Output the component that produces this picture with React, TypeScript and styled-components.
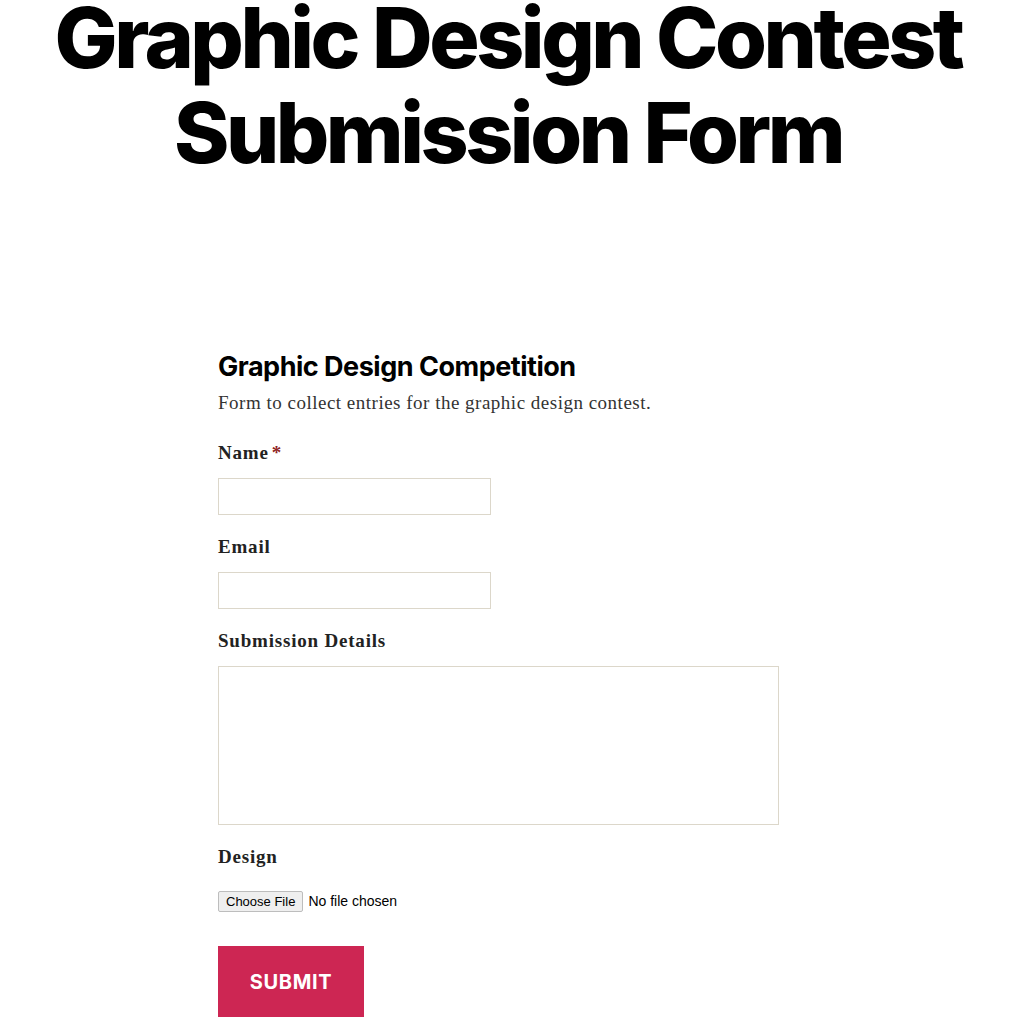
import React from "react";
import styled, { createGlobalStyle } from "styled-components";

const GlobalStyle = createGlobalStyle`
  html, body {
    margin: 0;
    padding: 0;
    background: #ffffff;
    color: #000000;
  }
  body {
    font-family: "Liberation Serif", "Times New Roman", serif;
    overflow: hidden;
  }
  * {
    box-sizing: border-box;
  }
`;

const Page = styled.main`
  width: 100%;
  display: flex;
  flex-direction: column;
  align-items: center;
`;

const EntryTitle = styled.h1`
  margin: 0;
  font-family: Inter, "Liberation Sans", sans-serif;
  font-size: 84px;
  font-weight: 800;
  letter-spacing: -0.0415625em;
  text-align: center;
  color: #000;
`;

const TitleLine = styled.span`
  display: block;
  line-height: 76px;
  & + & {
    margin-top: 19px;
  }
`;

const FormWrap = styled.section`
  width: 580px;
  margin-top: 180px;
`;

const FormTitle = styled.h3`
  margin: 0;
  font-family: Inter, "Liberation Sans", sans-serif;
  font-size: 27px;
  font-weight: 700;
  line-height: 32px;
  letter-spacing: -0.018em;
  color: #000;
`;

const FormDesc = styled.p`
  margin: 8px 0 0;
  font-size: 19px;
  line-height: 24px;
  letter-spacing: 0.5px;
  color: #333;
`;

const Fields = styled.div`
  margin-top: 26px;
  display: flex;
  flex-direction: column;
  gap: 20px;
`;

const Field = styled.div`
  display: flex;
  flex-direction: column;
  align-items: flex-start;
`;

const Label = styled.label<{ $gap?: number }>`
  font-size: 19px;
  font-weight: 700;
  line-height: 24px;
  letter-spacing: 0.8px;
  color: #222;
  margin-bottom: ${(p) => p.$gap ?? 13}px;
`;

const Required = styled.span`
  color: #8f2424;
  margin-left: 3px;
`;

const TextInput = styled.input`
  width: 273px;
  height: 37px;
  border: 1px solid #dcd7ca;
  border-radius: 0;
  background: #fff;
  padding: 6px 10px;
  font-size: 16px;
  font-family: inherit;
`;

const TextArea = styled.textarea`
  width: 561px;
  height: 159px;
  border: 1px solid #dcd7ca;
  border-radius: 0;
  background: #fff;
  padding: 10px;
  font-size: 16px;
  font-family: inherit;
  resize: none;
  display: block;
`;

const FileInput = styled.input`
  font-family: "Liberation Sans", Arial, sans-serif;
  font-size: 14px;
  color: #000;
  height: 21px;

  &::file-selector-button {
    font-family: "Liberation Sans", Arial, sans-serif;
    font-size: 13px;
    height: 21px;
    padding: 1px 7px;
    margin-right: 5px;
    background: #efefef;
    border: 1px solid #bdbdbd;
    border-radius: 2px;
    color: #000;
  }
`;

const SubmitButton = styled.button`
  margin-top: 34px;
  width: 146px;
  height: 71px;
  border: none;
  border-radius: 0;
  background: #cd2653;
  color: #fff;
  font-family: Inter, "Liberation Sans", sans-serif;
  font-size: 20px;
  font-weight: 700;
  letter-spacing: 0.0333em;
  text-transform: uppercase;
  cursor: pointer;
`;

export default function App() {
  return (
    <>
      <GlobalStyle />
      <Page>
        <EntryTitle>
          <TitleLine>Graphic Design Contest</TitleLine>
          <TitleLine>Submission Form</TitleLine>
        </EntryTitle>

        <FormWrap>
          <FormTitle>Graphic Design Competition</FormTitle>
          <FormDesc>Form to collect entries for the graphic design contest.</FormDesc>

          <Fields>
            <Field>
              <Label htmlFor="f-name">
                Name<Required>*</Required>
              </Label>
              <TextInput id="f-name" type="text" />
            </Field>
            <Field>
              <Label htmlFor="f-email">Email</Label>
              <TextInput id="f-email" type="email" />
            </Field>
            <Field>
              <Label htmlFor="f-details">Submission Details</Label>
              <TextArea id="f-details" />
            </Field>
            <Field>
              <Label htmlFor="f-design" $gap={22}>
                Design
              </Label>
              <FileInput id="f-design" type="file" />
            </Field>
          </Fields>

          <SubmitButton type="submit">Submit</SubmitButton>
        </FormWrap>
      </Page>
    </>
  );
}
